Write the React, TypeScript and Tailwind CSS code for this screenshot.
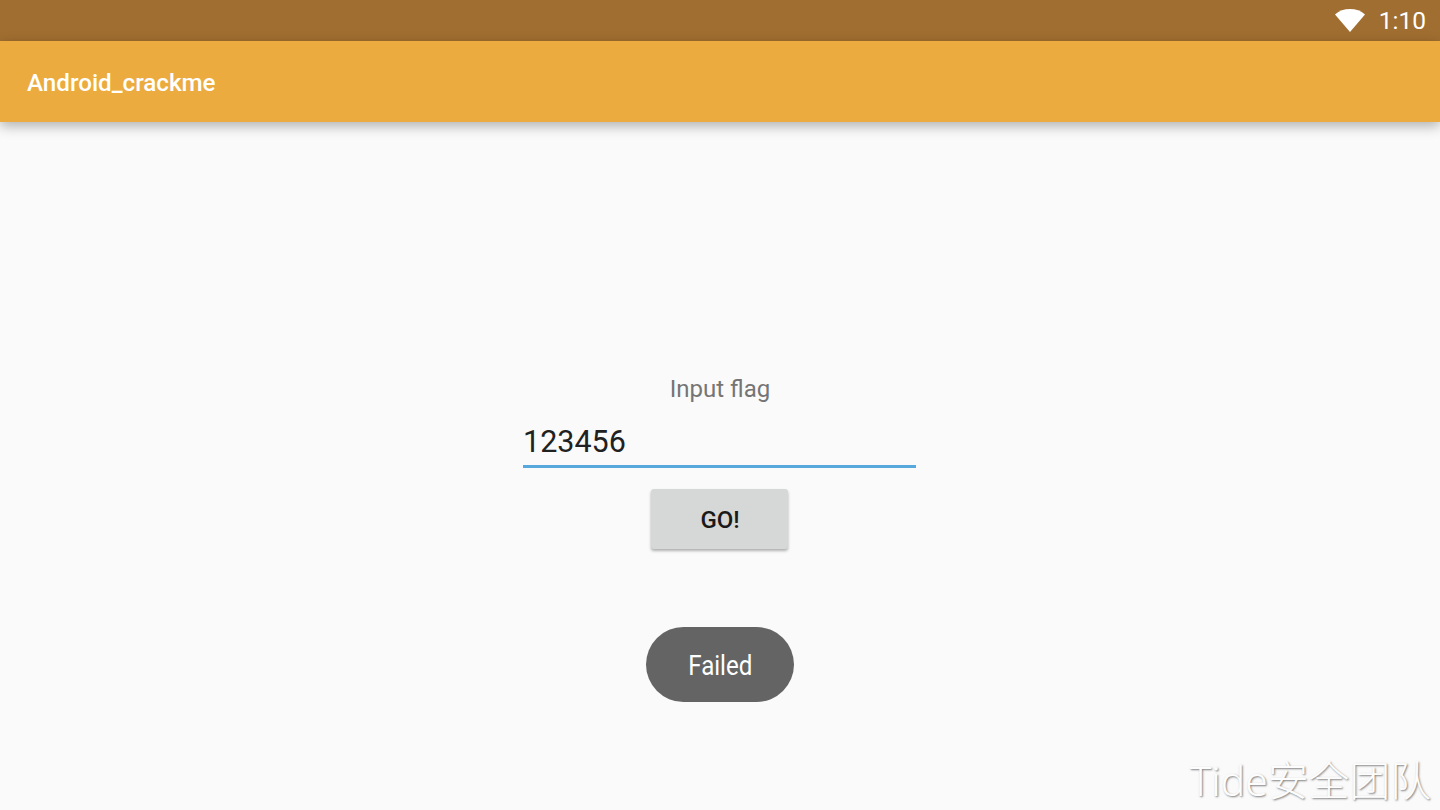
import React from "react"

const App = () => {
  return (
    <div className="relative flex h-[810px] w-[1440px] flex-col overflow-hidden bg-[#fafafa] font-['Roboto',sans-serif]">
      {/* Status bar */}
      <div className="flex h-[41px] items-center justify-end bg-[#a06e30] pr-[14px] text-white">
        <svg className="mr-[14px] mt-[-1px] h-[24px] w-[30px]" viewBox="0 0 30 24" fill="#fff">
          <path d="M0 6.5C4 2.8 9.3 1 15 1s11 1.8 15 5.5L15 24z" />
        </svg>
        <span className="mt-[2px] text-[24.5px] leading-none">1:10</span>
      </div>

      {/* App bar */}
      <div className="z-10 flex h-[81px] items-center bg-[#ebab3f] pl-[27px] pt-[3px] shadow-[0_4px_12px_rgba(0,0,0,0.3)]">
        <span className="text-[24.2px] font-medium leading-none text-white">Android_crackme</span>
      </div>

      {/* Form */}
      <div className="flex flex-col items-center pr-[1px] pt-[252px]">
        <div className="pl-[1px] text-[24px] leading-[30px] text-[#757575]">Input flag</div>
        <div className="mt-[22px] h-[31px] w-[393px] text-[30.5px] leading-[31px] text-[#212121]">123456</div>
        <div className="mt-[8px] h-[3px] w-[393px] bg-[#56a8dd]"></div>
        <button className="mt-[21px] flex h-[60px] w-[137px] items-center justify-center rounded-[3px] bg-[#d6d7d7] pl-[1px] pt-[2px] text-[24px] font-medium leading-none text-[#1a1a1a] shadow-[0_2px_3px_rgba(0,0,0,0.3)]">
          GO!
        </button>
      </div>

      {/* Toast */}
      <div className="absolute left-[646px] top-[627px] flex h-[75px] w-[148px] items-center justify-center rounded-full bg-[#646464] pt-[2px] text-[28px] text-white">
        <span className="inline-block scale-x-[0.86]">Failed</span>
      </div>

      {/* Watermark */}
      <div className="absolute bottom-[5px] right-[9px] font-['Noto_Sans','Noto_Sans_CJK_SC',sans-serif] text-[40.8px] font-light leading-[50px] text-[#fdfdfd] [text-shadow:1px_1px_2px_rgba(0,0,0,0.5)]">
        Tide安全团队
      </div>
    </div>
  )
}

export default App
